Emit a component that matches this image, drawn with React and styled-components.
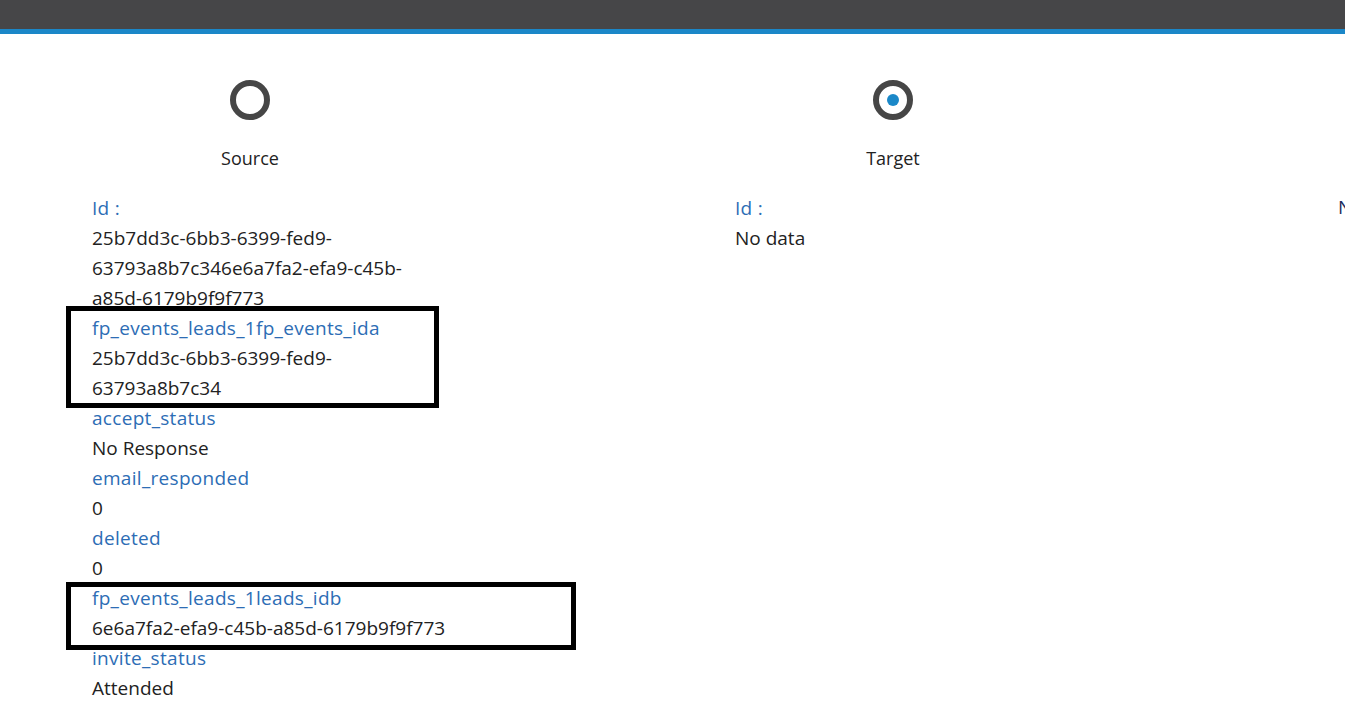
import styled, { createGlobalStyle } from "styled-components";

const GlobalStyle = createGlobalStyle`
  html, body {
    margin: 0;
    padding: 0;
    background: #ffffff;
    overflow: hidden;
  }
  body {
    font-family: "Open Sans", "Noto Sans", sans-serif;
    font-size: 18px;
    color: #222222;
  }
`;

const TopBar = styled.div`
  height: 29px;
  background: #464648;
  border-bottom: 5px solid #1b87c8;
`;

const Columns = styled.div`
  display: flex;
  width: 1500px;
`;

const Column = styled.div`
  width: 643px;
  flex: none;
  padding-left: 92px;
  box-sizing: border-box;
`;

const SideColumn = styled.div`
  flex: none;
  padding-left: 52px;
  padding-top: 158px;
  font-size: 19px;
  color: #1d2b5c;
  line-height: 30px;
  white-space: nowrap;
`;

const ColumnHead = styled.div`
  width: 316px;
  display: flex;
  flex-direction: column;
  align-items: center;
  padding-top: 46px;
  padding-bottom: 20px;
`;

const Radio = styled.div`
  width: 40px;
  height: 40px;
  box-sizing: border-box;
  border: 6.5px solid #464646;
  border-radius: 50%;
  display: flex;
  align-items: center;
  justify-content: center;

  &::before {
    content: "";
    display: ${(p) => (p.$checked ? "block" : "none")};
    width: 12px;
    height: 12px;
    border-radius: 50%;
    background: #1b88c8;
  }
`;

const HeadLabel = styled.div`
  margin-top: 23px;
  line-height: 30px;
  color: #222222;
`;

const Fields = styled.div`
  width: 358px;
  font-size: 19px;
  line-height: 30px;
`;

const Label = styled.div`
  color: #2d6db5;
  letter-spacing: 0.3px;
`;

const Value = styled.div`
  color: #222222;
`;

const Highlight = styled.div`
  position: relative;

  &::after {
    content: "";
    position: absolute;
    top: ${(p) => p.$top}px;
    bottom: ${(p) => p.$bottom}px;
    left: -26px;
    width: ${(p) => p.$width}px;
    box-sizing: border-box;
    border: 5px solid #000000;
    pointer-events: none;
  }
`;

const sourceFields = [
  { label: "Id :", value: "25b7dd3c-6bb3-6399-fed9-63793a8b7c346e6a7fa2-efa9-c45b-a85d-6179b9f9f773" },
  { label: "fp_events_leads_1fp_events_ida", value: "25b7dd3c-6bb3-6399-fed9-63793a8b7c34", box: { top: -7, bottom: -5, width: 373 } },
  { label: "accept_status", value: "No Response" },
  { label: "email_responded", value: "0" },
  { label: "deleted", value: "0" },
  { label: "fp_events_leads_1leads_idb", value: "6e6a7fa2-efa9-c45b-a85d-6179b9f9f773", box: { top: -1, bottom: -7, width: 510 } },
  { label: "invite_status", value: "Attended" },
];

const targetFields = [{ label: "Id :", value: "No data" }];

function Field({ label, value, box }) {
  const content = (
    <>
      <Label>{label}</Label>
      <Value>{value}</Value>
    </>
  );
  if (box) {
    return (
      <Highlight $top={box.top} $bottom={box.bottom} $width={box.width}>
        {content}
      </Highlight>
    );
  }
  return <div>{content}</div>;
}

function RecordColumn({ title, checked, fields }) {
  return (
    <Column>
      <ColumnHead>
        <Radio $checked={checked} />
        <HeadLabel>{title}</HeadLabel>
      </ColumnHead>
      <Fields>
        {fields.map((f) => (
          <Field key={f.label} {...f} />
        ))}
      </Fields>
    </Column>
  );
}

export default function App() {
  return (
    <>
      <GlobalStyle />
      <TopBar />
      <Columns>
        <RecordColumn title="Source" fields={sourceFields} />
        <RecordColumn title="Target" checked fields={targetFields} />
        <SideColumn>No data</SideColumn>
      </Columns>
    </>
  );
}
